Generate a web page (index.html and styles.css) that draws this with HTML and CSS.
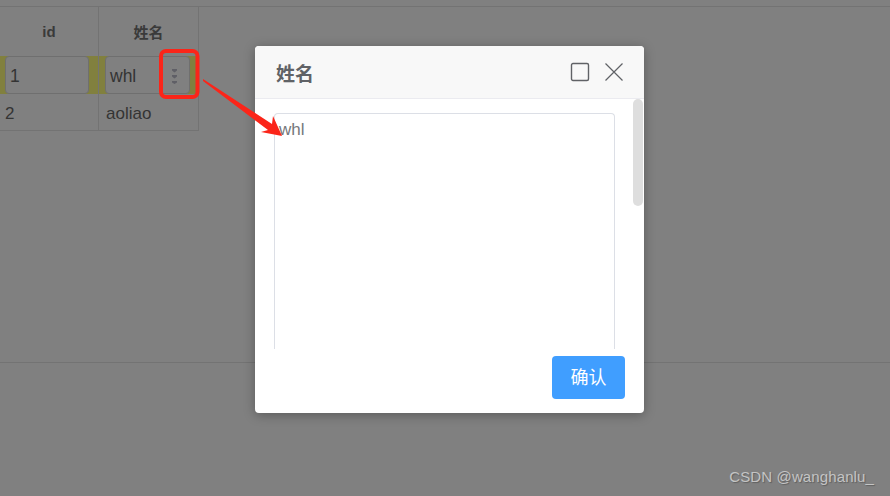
FILE: index.html
```html
<!DOCTYPE html>
<html lang="en">
<head>
<meta charset="UTF-8" />
<title>姓名</title>
<link rel="stylesheet" href="styles.css">
</head>
<body>

  <div class="page">
    <div class="table-wrap">
      <div class="table">
        <div class="cell head">id</div>
        <div class="cell head">姓名</div>

        <div class="cell edit">
          <div class="input">1</div>
        </div>
        <div class="cell edit">
          <div class="input">
            <span>whl</span>
            <svg class="dots" width="5" height="15" viewBox="0 0 5 15">
              <path d="M0 0h5v1.500l-2.500 2l-2.500 -2z M0 6h5v1.500l-2.500 2l-2.500 -2z M0 12h5v1.500l-2.500 1.500l-2.500 -1.500z" fill="#5f5f66" />
            </svg>
          </div>
        </div>

        <div class="cell">2</div>
        <div class="cell">aoliao</div>
      </div>
    </div>
    <div class="footer"></div>
  </div>

  <div class="dialog">
    <div class="dialog-head">
      <span class="dialog-title">姓名</span>
      <svg class="head-icon" width="20" height="20" viewBox="0 0 20 20">
        <rect x="1.500" y="1.500" width="17" height="17" rx="1.500" fill="none" stroke="#606266" stroke-width="1.400" />
      </svg>
      <svg class="head-icon" width="20" height="20" viewBox="0 0 20 20">
        <path d="M1.500 1.500L18.500 18.500M18.500 1.500L1.500 18.500" fill="none" stroke="#606266" stroke-width="1.200" />
      </svg>
    </div>
    <div class="dialog-body">
      <div class="textarea">whl</div>
      <div class="scrollbar"></div>
    </div>
    <div class="dialog-foot">
      <button class="confirm">确认</button>
    </div>
  </div>

  <!-- red annotation drawn over the screenshot -->
  <svg class="markup" width="890" height="496" viewBox="0 0 890 496">
    <rect x="161" y="51" width="36.500" height="46" rx="5" fill="none" stroke="#fb2519" stroke-width="4" />
    <path d="M203 79L272 124L273 116L282 136L261 132L268 130L203 81z" fill="#fb2519" />
  </svg>

  <div class="watermark">CSDN @wanghanlu_</div>

</body>
</html>
```

FILE: styles.css
```css
body {
  margin: 0;
  height: 496px;
  overflow: hidden;
  background-color: #808080;
  font-family: "Liberation Sans", "Noto Sans CJK SC", sans-serif;
}

.page {
  height: 100%;
  display: flex;
  flex-direction: column;
}

.table-wrap {
  height: 355px;
  margin-top: 6px;
  border-top: 1px solid #737373;
  border-bottom: 1px solid #737373;
}

.table {
  display: grid;
  grid-template-columns: 99px 100px;
  grid-template-rows: 49px 38px 37px;
  width: 199px;
  color: #343434;
}

.cell {
  display: flex;
  align-items: center;
  padding: 3px 0 0 5px;
  border-right: 1px solid #737373;
  border-bottom: 1px solid #737373;
  font-size: 17px;
}

.cell:nth-child(even) {
  padding-left: 7px;
}

.cell.head {
  justify-content: center;
  padding: 0;
  border-bottom: none;
  font-size: 15px;
  font-weight: bold;
  color: #3a3a3a;
}

.cell.edit {
  padding: 0 9px 0 5px;
  background-color: #81803e;
  border-bottom: none;
  font-size: 17.500px;
}

.cell.edit:nth-child(even) {
  padding: 0 8px 0 6px;
}

.input {
  flex: 1;
  box-sizing: border-box;
  height: 38px;
  display: flex;
  align-items: center;
  justify-content: space-between;
  padding: 2px 12px 0 4px;
  background-color: #808080;
  border: 1px solid #6f6f6f;
  border-radius: 4px;
}

.dots {
  flex: none;
}

.dialog {
  position: absolute;
  top: 46px;
  left: 255px;
  width: 389px;
  height: 367px;
  display: flex;
  flex-direction: column;
  background: white;
  border-radius: 4px;
  overflow: hidden;
  box-shadow: 0 2px 12px rgba(0,0,0,0.3);
}

.dialog-head {
  height: 52px;
  flex: none;
  display: flex;
  align-items: center;
  gap: 14px;
  padding: 0 20px 0 21px;
  background-color: #f8f8f8;
  border-bottom: 1px solid #ebebf0;
  color: #606266;
}

.dialog-title {
  flex: 1;
  font-size: 19px;
  font-weight: bold;
}

.dialog-body {
  position: relative;
  flex: 1;
  min-height: 0;
  padding: 14px 29px 0 19px;
}

.textarea {
  height: 100%;
  box-sizing: border-box;
  padding: 6px 4px;
  border: 1px solid #dcdfe6;
  border-bottom: none;
  border-radius: 4px 4px 0 0;
  font-size: 17px;
  color: #76787c;
}

.scrollbar {
  position: absolute;
  top: 0;
  right: 1px;
  width: 10px;
  height: 107px;
  border-radius: 5px;
  background-color: #dedede;
}

.dialog-foot {
  flex: none;
  height: 64px;
  display: flex;
  justify-content: flex-end;
  padding: 7px 19px 0 0;
  box-sizing: border-box;
}

.confirm {
  width: 73px;
  height: 43px;
  padding: 0 0 4px;
  border: none;
  border-radius: 4px;
  background-color: #409eff;
  color: white;
  font-family: inherit;
  font-size: 18px;
}

.markup {
  position: absolute;
  top: 0;
  left: 0;
}

.watermark {
  position: absolute;
  right: 16px;
  bottom: 11px;
  font-size: 15px;
  letter-spacing: 0.120px;
  color: #c4c4c4;
  text-shadow: 1px 1px 1px #5f5f5f;
}
```
